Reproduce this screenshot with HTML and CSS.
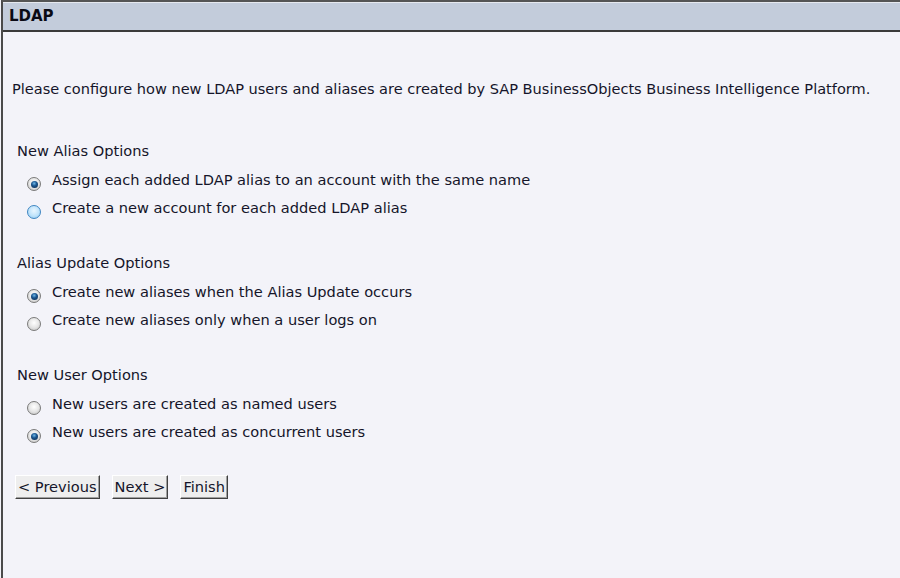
FILE: index.html
```html
<!DOCTYPE html>
<html>
<head>
<meta charset="utf-8">
<link rel="stylesheet" href="styles.css">
</head>
<body>
<div class="frame">
  <div class="titlebar">LDAP</div>
  <div class="content">
    <p class="intro">Please configure how new LDAP users and aliases are created by SAP BusinessObjects Business Intelligence Platform.</p>

    <div class="group">
      <div class="group-title">New Alias Options</div>
      <label class="opt"><span class="radio checked"></span><span class="lbl">Assign each added LDAP alias to an account with the same name</span></label>
      <label class="opt"><span class="radio hover"></span><span class="lbl">Create a new account for each added LDAP alias</span></label>
    </div>

    <div class="group">
      <div class="group-title">Alias Update Options</div>
      <label class="opt"><span class="radio checked"></span><span class="lbl">Create new aliases when the Alias Update occurs</span></label>
      <label class="opt"><span class="radio"></span><span class="lbl">Create new aliases only when a user logs on</span></label>
    </div>

    <div class="group">
      <div class="group-title">New User Options</div>
      <label class="opt"><span class="radio"></span><span class="lbl">New users are created as named users</span></label>
      <label class="opt"><span class="radio checked"></span><span class="lbl">New users are created as concurrent users</span></label>
    </div>

    <div class="buttons">
      <button class="btn">&lt; Previous</button>
      <button class="btn">Next &gt;</button>
      <button class="btn">Finish</button>
    </div>
  </div>
</div>
</body>
</html>
```
FILE: styles.css
```css
html, body {
  margin: 0;
  padding: 0;
  height: 100%;
  background: #f3f3f9;
}
body {
  font-family: "DejaVu Sans", Verdana, sans-serif;
  color: #15152a;
  overflow: hidden;
}
.frame {
  margin-left: 1px;
  height: 578px;
  border-left: 2px solid #4a4a4a;
  border-top: 2px solid #555;
  box-sizing: border-box;
  background: #f3f3f9;
}
.titlebar {
  height: 27px;
  background: #c3ccdb;
  border-top: 1px solid #e6e9ef;
  border-bottom: 2px solid #3a3a3a;
  box-sizing: content-box;
  font-weight: bold;
  font-size: 15px;
  line-height: 27px;
  padding-left: 6px;
  color: #0a0a14;
}
.content {
  padding-left: 9px;
}
.intro {
  margin: 48px 0 0 0;
  font-size: 14.55px;
  line-height: 18px;
}
.group {
  margin-top: 44px;
  padding-left: 5px;
}
.group + .group {
  margin-top: 32px;
}
.group-title {
  font-size: 14.6px;
  line-height: 18px;
  margin-bottom: 6px;
}
.opt {
  display: flex;
  align-items: center;
  height: 28px;
  margin-left: 10px;
}
.lbl {
  font-size: 14.6px;
  line-height: 18px;
  margin-left: 11px;
}
.radio {
  width: 14px;
  height: 14px;
  border-radius: 50%;
  box-sizing: border-box;
  border: 1px solid #7a7a7a;
  background: radial-gradient(circle at 50% 40%, #ffffff 0%, #e6e6e6 50%, #bdbdbd 100%);
  margin-top: 8px;
  position: relative;
  flex: none;
}
.radio.hover {
  border-color: #3f86c2;
  background: radial-gradient(circle at 50% 40%, #e9f6ff 0%, #bfe3fb 55%, #86c3ec 100%);
}
.radio.checked::after {
  content: "";
  position: absolute;
  left: 2.5px;
  top: 2.5px;
  width: 7px;
  height: 7px;
  border-radius: 50%;
  background: radial-gradient(circle at 45% 35%, #6fb8e8 0%, #1a5690 40%, #0a2444 100%);
}
.buttons {
  display: flex;
  gap: 12px;
  margin-top: 29px;
  padding-left: 3px;
}
.btn {
  font-family: "DejaVu Sans", Verdana, sans-serif;
  font-size: 14.6px;
  color: #15152a;
  background: #eeeeee;
  border: 1px solid;
  border-color: #ffffff #404040 #404040 #ffffff;
  box-shadow: inset -1px -1px 0 #a0a0a0;
  padding: 0 2px;
  height: 24px;
  line-height: 20px;
  margin: 0;
}
```
